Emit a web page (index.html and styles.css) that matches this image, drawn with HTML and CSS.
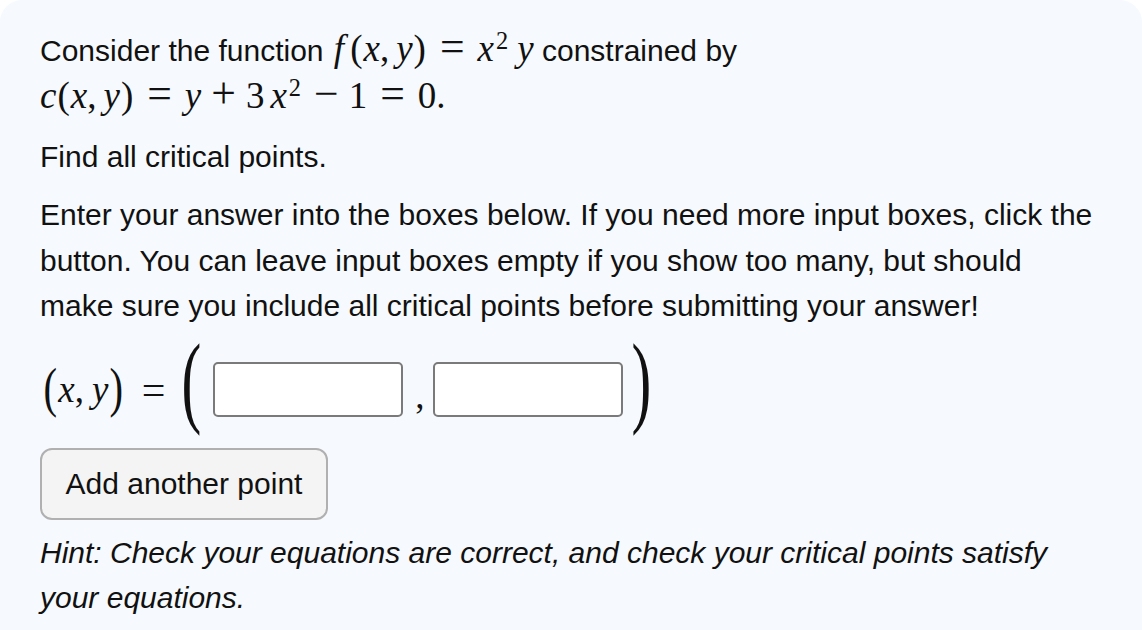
FILE: index.html
```html
<!DOCTYPE html>
<html lang="en">
<head>
<meta charset="utf-8">
<title>Critical points</title>
<link rel="stylesheet" href="styles.css">
</head>
<body>
<main class="card">
  <p class="para first">Consider the function <span class="math"><i class="f">f</i><span class="paren">(</span><i>x</i><span class="comma">,</span><i>y</i><span class="paren">)</span><span class="rel">=</span><i>x</i><sup>2</sup><span class="gap"></span><i>y</i></span> constrained by <span class="math"><i>c</i><span class="paren">(</span><i>x</i><span class="comma">,</span><i>y</i><span class="paren">)</span><span class="rel">=</span><i>y</i><span class="bin">+</span><span>3</span><span class="thin"></span><i>x</i><sup>2</sup><span class="bin wide">−</span><span>1</span><span class="rel">=</span><span>0.</span></span></p>

  <p class="para">Find all critical points.</p>

  <p class="para long">Enter your answer into the boxes below. If you need more input boxes, click the button. You can leave input boxes empty if you show too many, but should make sure you include all critical points before submitting your answer!</p>

  <div class="answer-row">
    <span class="math lhs"><span class="mid-paren">(</span><i>x</i><span class="comma">,</span><i>y</i><span class="mid-paren">)</span></span>
    <span class="math eq">=</span>
    <span class="big-paren open">(</span>
    <input class="box" type="text" aria-label="x">
    <span class="math box-comma">,</span>
    <input class="box" type="text" aria-label="y">
    <span class="big-paren close">)</span>
  </div>

  <button class="add" type="button">Add another point</button>

  <p class="hint">Hint: Check your equations are correct, and check your critical points satisfy your equations.</p>
</main>
</body>
</html>
```

FILE: styles.css
```css
html, body {
  margin: 0;
  padding: 0;
  background: #ffffff;
  overflow: hidden;
}

.card {
  background: #f6f9fd;
  border-radius: 22px 22px 0 0;
  min-height: 660px;
  box-sizing: border-box;
  padding: 27px 46px 0 40px;
  font-family: "Liberation Sans", Arial, sans-serif;
  font-size: 30px;
  color: #111111;
  display: flex;
  flex-direction: column;
  align-items: flex-start;
}

.para {
  margin: 13px 0 0 0;
  line-height: 46px;
}

.para.first {
  margin-top: 0;
  line-height: 47px;
}

.para.long {
  margin-top: 12px;
  line-height: 45.5px;
}

.math {
  font-family: "Liberation Serif", "Times New Roman", serif;
  font-size: 37px;
  line-height: 30px;
  white-space: nowrap;
  color: #111111;
}

.math i {
  font-style: italic;
}

.math .f {
  margin-left: 2px;
  margin-right: 5px;
}

.math sup {
  font-size: 0.66em;
  vertical-align: 0.5em;
  line-height: 0;
  margin-left: 2px;
}

.paren {
  margin: 0 1px;
}

.comma {
  margin-right: 7px;
}

.rel {
  font-size: 1.18em;
  line-height: 0;
  margin: 0 13px;
}

.bin {
  font-size: 1.18em;
  line-height: 0;
  margin: 0 10px;
}

.bin.wide {
  margin-left: 13px;
  margin-right: 10px;
}

.gap {
  display: inline-block;
  width: 9px;
}

.thin {
  display: inline-block;
  width: 6px;
}

.answer-row {
  margin-top: 16px;
  height: 90px;
  display: flex;
  align-items: center;
  padding-left: 2px;
}

.lhs {
  display: inline-flex;
  align-items: center;
}

.lhs .comma {
  margin-right: 8px;
}

.mid-paren {
  display: inline-block;
  transform: translateY(-2px) scale(1.1, 1.5);
  margin: 0 2px;
}

.eq {
  margin-left: 17px;
  margin-right: 17px;
  font-size: 42px;
}

.big-paren {
  font-family: "Liberation Serif", "Times New Roman", serif;
  font-size: 44px;
  display: inline-block;
  line-height: 1;
  transform: translateY(-8px) scale(1.35, 2.3);
}

.big-paren.open {
  margin-left: 2px;
}

.box {
  box-sizing: border-box;
  width: 190px;
  height: 55px;
  border: 2px solid #7a7a7a;
  border-radius: 5px;
  background: #ffffff;
  margin: 0 0 0 14px;
  font-size: 24px;
}

.box-comma {
  margin: 12px 9px 0 12px;
}

.box-comma + .box {
  margin-left: 0;
}

.big-paren.close {
  margin-left: 11px;
}

.add {
  margin-top: 13px;
  width: 288px;
  height: 72px;
  box-sizing: border-box;
  background: #f4f4f4;
  border: 2px solid #b0b0b0;
  border-radius: 12px;
  font-family: "Liberation Sans", Arial, sans-serif;
  font-size: 30px;
  color: #111111;
  padding: 0;
}

.hint {
  margin: 10px 0 0 0;
  font-style: italic;
  line-height: 45.5px;
}
```
